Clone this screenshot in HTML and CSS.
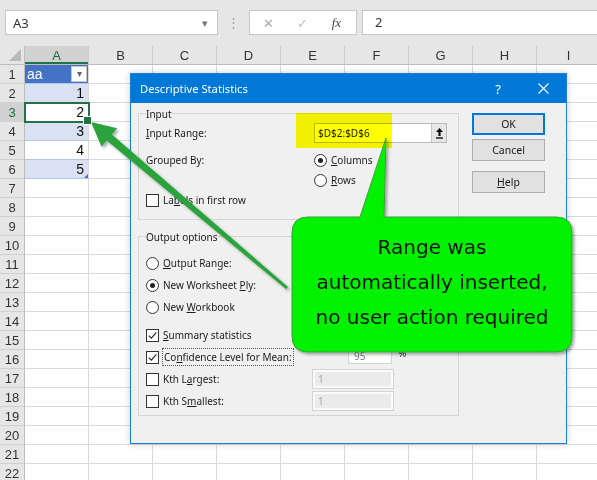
FILE: index.html
```html
<!DOCTYPE html>
<html>
<head>
    <meta charset='utf-8'>
    <title>Descriptive Statistics</title>
    <link rel="stylesheet" href="styles.css">
</head>
<body>
    <div class='topbar'>
        <div class='namebox'><span>A3</span><span class='caret'>▾</span></div>
        <div class='grip'>⋮</div>
        <div class='fxbox'>
            <span class='fx-cancel'>✕</span>
            <span class='fx-enter'>✓</span>
            <span class='fx-label'>fx</span>
        </div>
        <div class='formula'>2</div>
    </div>

    <div class='sheet'>
        <div class='corner'><div class='corner-tri'></div></div>
        <div class='colheads'>
            <div class='colhead active'>A</div>
            <div class='colhead'>B</div>
            <div class='colhead'>C</div>
            <div class='colhead'>D</div>
            <div class='colhead'>E</div>
            <div class='colhead'>F</div>
            <div class='colhead'>G</div>
            <div class='colhead'>H</div>
            <div class='colhead'>I</div>
        </div>
        <div class='rowheads'>
            <div class='rowhead'>1</div>
            <div class='rowhead'>2</div>
            <div class='rowhead active'>3</div>
            <div class='rowhead'>4</div>
            <div class='rowhead'>5</div>
            <div class='rowhead'>6</div>
            <div class='rowhead'>7</div>
            <div class='rowhead'>8</div>
            <div class='rowhead'>9</div>
            <div class='rowhead'>10</div>
            <div class='rowhead'>11</div>
            <div class='rowhead'>12</div>
            <div class='rowhead'>13</div>
            <div class='rowhead'>14</div>
            <div class='rowhead'>15</div>
            <div class='rowhead'>16</div>
            <div class='rowhead'>17</div>
            <div class='rowhead'>18</div>
            <div class='rowhead'>19</div>
            <div class='rowhead'>20</div>
            <div class='rowhead'>21</div>
            <div class='rowhead'>22</div>
        </div>
        <div class='cells'>
            <div class='col-a'>
                <div class='cell head'><span>aa</span><span class='filter'>▾</span></div>
                <div class='cell band'>1</div>
                <div class='cell selected'>2</div>
                <div class='cell band'>3</div>
                <div class='cell'>4</div>
                <div class='cell band last'>5</div>
            </div>
        </div>
    </div>

    <div class='dialog'>
        <div class='titlebar'>
            <span class='title'>Descriptive Statistics</span>
            <span class='help-q'>?</span>
            <span class='close'>
                <svg width="11" height="11" viewBox="0 0 11 11"><path d="M0.5 0.5 L10.5 10.5 M10.5 0.5 L0.5 10.5" stroke="#fff" stroke-width="1.1"/></svg>
            </span>
        </div>
        <div class='dlg-body'>
            <div class='dlg-left'>
                <div class='group input-group'>
                    <div class='group-title'>Input</div>
                    <div class='row r-range'>
                        <span class='row-label'><u>I</u>nput Range:</span>
                        <div class='rangebox'>
                            <span class='val'>$D$2:$D$6</span>
                            <span class='refbtn'>
                                <svg width="7" height="11" viewBox="0 0 7 11"><path d="M3.5 0 L7 4 H4.6 V8 H2.4 V4 H0 Z" fill="#111"/><rect x="0" y="9.3" width="7" height="1.4" fill="#111"/></svg>
                            </span>
                        </div>
                    </div>
                    <div class='row r-group'>
                        <span class='row-label'>Grouped By:</span>
                        <span class='radio on'></span><span><u>C</u>olumns</span>
                    </div>
                    <div class='row r-indent'>
                        <span class='radio'></span><span><u>R</u>ows</span>
                    </div>
                    <div class='row'>
                        <span class='check'></span><span>La<u>b</u>els in first row</span>
                    </div>
                </div>

                <div class='group output-group'>
                    <div class='group-title'>Output options</div>
                    <div class='orow first'>
                        <span class='radio'></span><span><u>O</u>utput Range:</span>
                    </div>
                    <div class='orow'>
                        <span class='radio on'></span><span>New Worksheet <u>P</u>ly:</span>
                    </div>
                    <div class='orow'>
                        <span class='radio'></span><span>New <u>W</u>orkbook</span>
                    </div>
                    <div class='orow gap'>
                        <span class='check'><svg width="9" height="9" viewBox="0 0 9 9"><path d="M0.8 4.6 L3.4 7.2 L8.3 1.4" fill="none" stroke="#222" stroke-width="1.1"/></svg></span>
                        <span><u>S</u>ummary statistics</span>
                    </div>
                    <div class='orow'>
                        <span class='opt wide'>
                            <span class='check'><svg width="9" height="9" viewBox="0 0 9 9"><path d="M0.8 4.6 L3.4 7.2 L8.3 1.4" fill="none" stroke="#222" stroke-width="1.1"/></svg></span>
                            <span class='focus'>Co<u>n</u>fidence Level for Mean:</span>
                        </span>
                        <span class='numbox pct'>95</span>
                        <span class='pct-sign'>%</span>
                    </div>
                    <div class='orow'>
                        <span class='opt'><span class='check'></span><span>Kth L<u>a</u>rgest:</span></span>
                        <span class='numbox off'>1</span>
                    </div>
                    <div class='orow'>
                        <span class='opt'><span class='check'></span><span>Kth S<u>m</u>allest:</span></span>
                        <span class='numbox off'>1</span>
                    </div>
                </div>
            </div>
            <div class='dlg-buttons'>
                <div class='btn default'>OK</div>
                <div class='btn'>Cancel</div>
                <div class='btn help'><u>H</u>elp</div>
            </div>
        </div>
    </div>

    <div class='highlight'></div>

    <svg class='overlay' width="597" height="480" viewBox="0 0 597 480">
        <defs>
            <filter id="shadow" x="-10%" y="-10%" width="130%" height="130%">
                <feDropShadow dx="2" dy="2" stdDeviation="1.8" flood-color="#000" flood-opacity="0.35"/>
            </filter>
        </defs>
        <!-- arrow pointing at A3 -->
        <polygon filter="url(#shadow)" fill="#2aa33c"
            points="91,122 117,128.3 111.9,134.4 288,286.9 286,289.1 106.7,140.6 101.6,146.7"/>
        <!-- callout bubble -->
        <path filter="url(#shadow)" fill="#00f200" stroke="#3f9f3f" stroke-width="1"
            d="M308,217 L360,217 L386,138 L384,217 L556,217 Q572,217 572,233 L572,336 Q572,352 556,352 L308,352 Q292,352 292,336 L292,233 Q292,217 308,217 Z"/>
    </svg>

    <div class='callout-text'>Range was<br>automatically inserted,<br>no user action required</div>
</body>
</html>
```

FILE: styles.css
```css
* {
    box-sizing: border-box;
}
body {
    margin: 0;
    width: 597px;
    height: 480px;
    overflow: hidden;
    position: relative;
    background: #fff;
    font-family: "Noto Sans", "Liberation Sans", sans-serif;
    color: #222;
}

/* formula bar */
.topbar {
    height: 46px;
    background: #e6e6e6;
    display: flex;
    align-items: flex-start;
    padding: 10px 0 0 5px;
    font-size: 13px;
}
.namebox {
    width: 213px;
    height: 25px;
    background: #fff;
    border: 1px solid #c6c6c6;
    display: flex;
    align-items: center;
    justify-content: space-between;
    padding: 0 9px 0 7px;
    color: #333;
}
.caret {
    color: #777;
    font-size: 11px;
}
.grip {
    width: 31px;
    text-align: center;
    line-height: 25px;
    color: #a0a0a0;
}
.fxbox {
    width: 108px;
    height: 25px;
    background: #fff;
    border: 1px solid #c6c6c6;
    display: flex;
    align-items: center;
}
.fxbox span {
    text-align: center;
}
.fx-cancel {
    width: 38px;
    color: #a8a8a8;
}
.fx-enter {
    width: 30px;
    color: #bdbdbd;
}
.fx-label {
    width: 40px;
    font-family: "Liberation Serif", serif;
    font-style: italic;
    color: #444;
}
.formula {
    flex: 1;
    margin-left: 5px;
    height: 25px;
    background: #fff;
    border: 1px solid #c6c6c6;
    border-right: none;
    padding-left: 12px;
    line-height: 23px;
    color: #333;
}

/* grid */
.sheet {
    display: grid;
    grid-template-columns: 25px 1fr;
    grid-template-rows: 19px 1fr;
    height: 434px;
    font-family: "Liberation Sans", sans-serif;
}
.corner {
    background: #e6e6e6;
    border-right: 1px solid #bdbdbd;
    border-bottom: 1px solid #bdbdbd;
    display: flex;
    justify-content: flex-end;
    align-items: flex-end;
    padding: 0 3px 3px 0;
}
.corner-tri {
    width: 0;
    height: 0;
    border-left: 12px solid transparent;
    border-bottom: 12px solid #b9b9b9;
}
.colheads {
    display: flex;
    overflow: hidden;
    background: #e6e6e6;
    border-bottom: 1px solid #bdbdbd;
}
.colhead {
    flex: 0 0 64px;
    height: 18px;
    border-right: 1px solid #cdcdcd;
    text-align: center;
    font-size: 13px;
    line-height: 19px;
    color: #333;
}
.colhead.active {
    background: #d2d2d2;
    color: #1e6b3e;
    box-shadow: inset 0 -2px #217346;
}
.rowheads {
    background: #e6e6e6;
    border-right: 1px solid #bdbdbd;
    overflow: hidden;
}
.rowhead {
    height: 19px;
    border-bottom: 1px solid #d0d0d0;
    text-align: center;
    font-size: 13px;
    line-height: 19px;
    color: #333;
}
.rowhead.active {
    background: #d2d2d2;
    color: #1e6b3e;
}
.cells {
    background-color: #fff;
    background-image:
        linear-gradient(to left, #dadada 1px, transparent 1px),
        linear-gradient(to top, #dadada 1px, transparent 1px);
    background-size: 64px 19px;
}
.col-a {
    width: 64px;
}
.cell {
    height: 19px;
    border-bottom: 1px solid #b4c6e7;
    border-right: 1px solid #dadada;
    text-align: right;
    padding-right: 4px;
    font-size: 14px;
    line-height: 19px;
    color: #111;
}
.cell.band {
    background: #d9e1f2;
}
.cell.head {
    background: #4472c4;
    color: #fff;
    text-align: left;
    display: flex;
    justify-content: space-between;
    align-items: center;
    padding: 0 1px 0 2px;
}
.filter {
    width: 16px;
    height: 16px;
    background: #fff;
    border: 1px solid #c6c6c6;
    color: #666;
    font-size: 10px;
    line-height: 14px;
    text-align: center;
}
.cell.selected {
    position: relative;
    z-index: 1;
    background: #fff;
    outline: 2px solid #217346;
    outline-offset: -1px;
}
.cell.selected::after {
    content: '';
    position: absolute;
    right: -4px;
    bottom: -4px;
    width: 7px;
    height: 7px;
    background: #217346;
    border: 1px solid #fff;
}
.cell.last {
    position: relative;
}
.cell.last::after {
    content: '';
    position: absolute;
    right: 0;
    bottom: 0;
    border-left: 4px solid transparent;
    border-bottom: 4px solid #4472c4;
}

/* dialog */
.dialog {
    position: absolute;
    left: 130px;
    top: 73px;
    width: 437px;
    height: 371px;
    background: #f0f0f0;
    border: 1px solid #1a7fd4;
    box-shadow: 0 0 7px rgba(0, 0, 0, 0.2);
    font-size: 10px;
    color: #1a1a1a;
}
.titlebar {
    height: 29px;
    background: #0078d7;
    color: #fff;
    display: flex;
    align-items: center;
    padding-left: 9px;
    font-size: 11.2px;
}
.title {
    flex: 1;
}
.help-q {
    width: 44px;
    text-align: center;
    font-size: 13px;
}
.close {
    width: 46px;
    display: flex;
    justify-content: center;
}
.dlg-body {
    display: flex;
    padding: 10px 0 0 7px;
}
.dlg-left {
    width: 321px;
}
.group {
    border: 1px solid #d5d5d5;
    padding: 0 8px 0 7px;
}
.group-title {
    margin-top: -6px;
    line-height: 13px;
    width: max-content;
    background: #f0f0f0;
}
.input-group {
    height: 107px;
}
.row {
    display: flex;
    align-items: center;
    height: 20px;
}
.r-range {
    margin-top: 2px;
}
.r-group {
    margin-top: 7px;
}
.r-indent {
    padding-left: 168px;
}
.row-label {
    width: 168px;
}
.radio {
    width: 13px;
    height: 13px;
    border: 1px solid #333;
    border-radius: 50%;
    background: #fff;
    margin-right: 4px;
    display: flex;
    align-items: center;
    justify-content: center;
    flex-shrink: 0;
}
.radio.on::after {
    content: '';
    width: 5px;
    height: 5px;
    border-radius: 50%;
    background: #222;
}
.check {
    width: 13px;
    height: 13px;
    border: 1px solid #333;
    background: #fff;
    margin-right: 4px;
    display: flex;
    align-items: center;
    justify-content: center;
    flex-shrink: 0;
}
.rangebox {
    width: 133px;
    height: 20px;
    border: 1px solid #b9b9b9;
    background: #fff;
    display: flex;
    align-items: center;
    padding-left: 3px;
}
.rangebox .val {
    flex: 1;
}
.refbtn {
    width: 15px;
    height: 18px;
    background: #e6e6e6;
    border-left: 1px solid #c3c3c3;
    display: flex;
    align-items: center;
    justify-content: center;
}
.output-group {
    margin-top: 16px;
    height: 180px;
}
.orow {
    display: flex;
    align-items: center;
    height: 22px;
}
.orow.first {
    margin-top: 8px;
}
.orow.gap {
    margin-top: 6px;
}
.opt {
    width: 166px;
    display: flex;
    align-items: center;
}
.opt.wide {
    width: 202px;
}
.focus {
    outline: 1px dotted #555;
    padding: 1px 1px;
}
.numbox {
    width: 82px;
    height: 20px;
    border: 1px solid #d3d3d3;
    background: #ebebeb;
    box-shadow: inset 0 0 0 2px #fafafa;
    padding-left: 5px;
    line-height: 18px;
    color: #a5a5a5;
}
.numbox.pct {
    width: 44px;
    height: 18px;
    align-self: flex-start;
    background: #fff;
    box-shadow: none;
    color: #777;
}
.pct-sign {
    margin-left: 6px;
    align-self: flex-start;
    line-height: 14px;
}
.dlg-buttons {
    margin-left: 13px;
    width: 73px;
    display: flex;
    flex-direction: column;
}
.btn {
    height: 22px;
    border: 1px solid #adadad;
    background: #e1e1e1;
    text-align: center;
    line-height: 20px;
    font-size: 10.5px;
}
.btn + .btn {
    margin-top: 4px;
}
.btn.help {
    margin-top: 10px;
}
.btn.default {
    border-color: #0078d7;
    box-shadow: inset 0 0 0 1px #0078d7;
}

/* annotations */
.highlight {
    position: absolute;
    left: 296px;
    top: 113px;
    width: 96px;
    height: 35px;
    background: #ffff00;
    mix-blend-mode: multiply;
}
.overlay {
    position: absolute;
    left: 0;
    top: 0;
}
.callout-text {
    position: absolute;
    left: 292px;
    top: 215px;
    width: 280px;
    height: 135px;
    display: flex;
    align-items: center;
    justify-content: center;
    text-align: center;
    font-family: "DejaVu Sans", sans-serif;
    font-size: 20px;
    line-height: 35px;
    color: #111;
}
```
